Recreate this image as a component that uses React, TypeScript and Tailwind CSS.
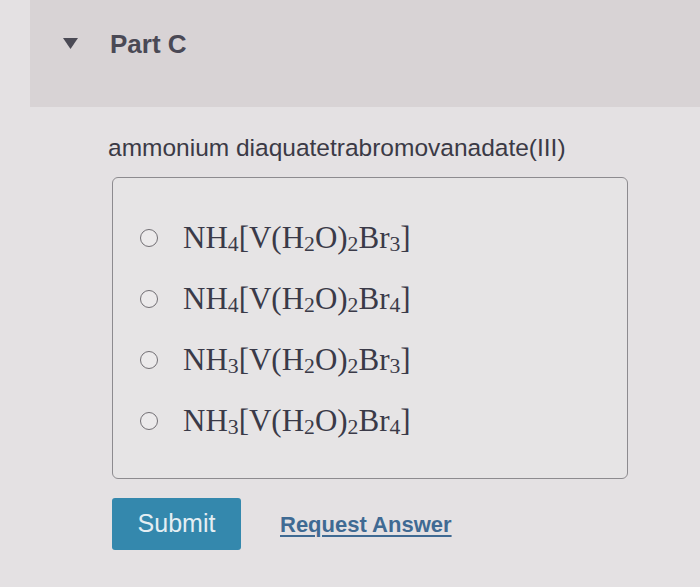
import React from 'react';

const sans = { fontFamily: '"Liberation Sans", Arial, sans-serif' };
const serif = { fontFamily: '"Liberation Serif", "Times New Roman", serif' };

type Formula = { cation: string; ligand: string; halide: string };

const options: Formula[] = [
  { cation: '4', ligand: '2', halide: '3' },
  { cation: '4', ligand: '2', halide: '4' },
  { cation: '3', ligand: '2', halide: '3' },
  { cation: '3', ligand: '2', halide: '4' },
];

const Sub = ({ children }: { children: React.ReactNode }) => (
  <sub className="text-[0.7em] relative top-[0.15em] align-baseline">{children}</sub>
);

const Option = ({ f }: { f: Formula }) => (
  <label className="flex items-center h-[61px] cursor-pointer">
    <span className="w-[18px] h-[18px] rounded-full border-[1.5px] border-[#726f74] bg-[#eceaeb]" />
    <span className="ml-[25px] text-[31px] text-[#3a3a48] leading-none" style={serif}>
      NH<Sub>{f.cation}</Sub>[V(H<Sub>2</Sub>O)<Sub>{f.ligand}</Sub>Br<Sub>{f.halide}</Sub>]
    </span>
  </label>
);

export default function App() {
  return (
    <div className="w-[700px] h-[587px] bg-[#e4e1e3] overflow-hidden" style={sans}>
      <div className="ml-[30px] h-[107px] bg-[#d8d3d5] pt-[31px] pl-[33px] flex items-start">
        <div className="flex items-center h-[26px]">
          <svg width="15" height="11" viewBox="0 0 15 11" className="mt-[-2px]">
            <path d="M0 0 L15 0 L7.5 11 Z" fill="#4b4a55" />
          </svg>
          <span className="ml-[32px] text-[26px] font-bold text-[#4a4955]">Part C</span>
        </div>
      </div>

      <div className="pl-[108px] mt-[27px] text-[24.5px] leading-[28px] text-[#3b3a46]">
        ammonium diaquatetrabromovanadate(III)
      </div>

      <div className="ml-[112px] mt-[15px] w-[516px] h-[302px] border-[1.5px] border-[#8d8b8f] rounded-[6px] bg-[#e6e4e5] pl-[27px] pt-[29px]">
        {options.map((f, i) => (
          <Option key={i} f={f} />
        ))}
      </div>

      <div className="ml-[112px] mt-[19px] flex items-center">
        <button className="w-[129px] h-[52px] rounded-[3px] bg-[#3488ad] text-[#e4eef3] text-[25px]">
          Submit
        </button>
        <a className="ml-[39px] text-[22px] font-bold text-[#3f6a93] underline underline-offset-[3px]">
          Request Answer
        </a>
      </div>
    </div>
  );
}
